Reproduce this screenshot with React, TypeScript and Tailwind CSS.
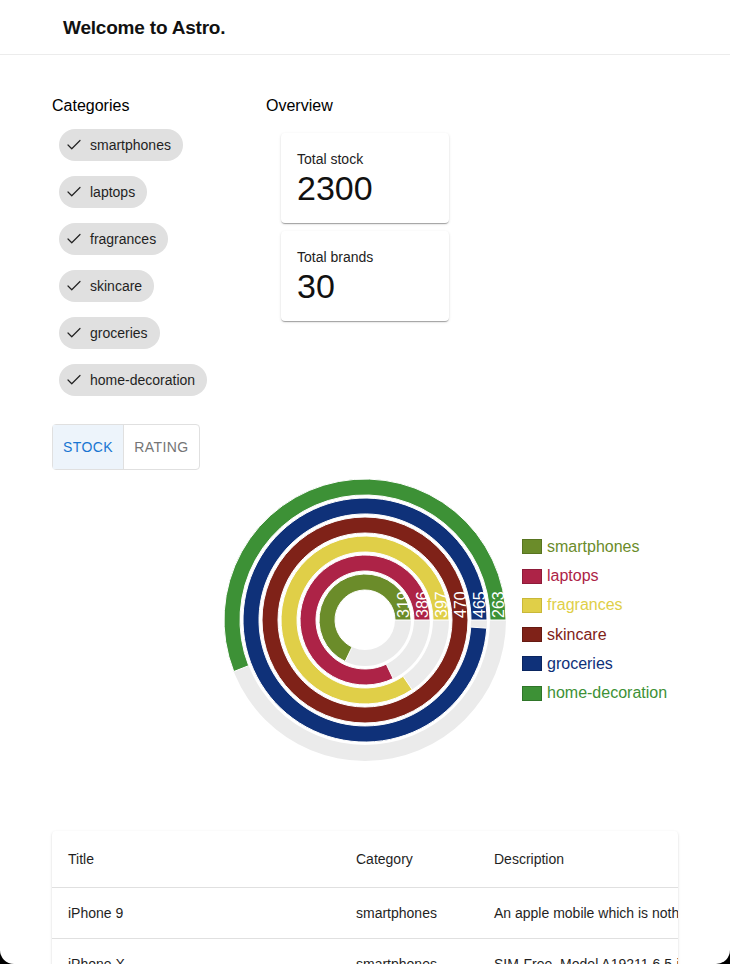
import { Check } from "lucide-react";

const series = [
  { name: "smartphones", value: 319, color: "#6b8c2a", text: "text-[#6b8c2a]", box: "bg-[#6b8c2a] border-[#587420]" },
  { name: "laptops", value: 386, color: "#ad2347", text: "text-[#ad2347]", box: "bg-[#ad2347] border-[#8e1b39]" },
  { name: "fragrances", value: 397, color: "#e0cf48", text: "text-[#e0cf48]", box: "bg-[#e0cf48] border-[#c9b838]" },
  { name: "skincare", value: 470, color: "#7f2218", text: "text-[#7f2218]", box: "bg-[#7f2218] border-[#661a12]" },
  { name: "groceries", value: 465, color: "#0f3179", text: "text-[#0f3179]", box: "bg-[#0f3179] border-[#0a2560]" },
  { name: "home-decoration", value: 263, color: "#3d9136", text: "text-[#3d9136]", box: "bg-[#3d9136] border-[#2f7529]" },
];

const products = [
  {
    title: "iPhone 9",
    category: "smartphones",
    description: "An apple mobile which is nothing like apple",
  },
  {
    title: "iPhone X",
    category: "smartphones",
    description:
      "SIM-Free, Model A19211 6.5-inch Super Retina HD display with OLED technology A12 Bionic chip with",
  },
];

const CX = 145;
const CY = 145;

function pt(r: number, deg: number) {
  const a = (deg * Math.PI) / 180;
  return `${(CX + r * Math.cos(a)).toFixed(2)} ${(CY - r * Math.sin(a)).toFixed(2)}`;
}

function sector(r0: number, r1: number, deg: number) {
  if (deg >= 359.9) {
    return `M ${CX + r1} ${CY} A ${r1} ${r1} 0 1 0 ${CX - r1} ${CY} A ${r1} ${r1} 0 1 0 ${CX + r1} ${CY} Z M ${CX + r0} ${CY} A ${r0} ${r0} 0 1 1 ${CX - r0} ${CY} A ${r0} ${r0} 0 1 1 ${CX + r0} ${CY} Z`;
  }
  const large = deg > 180 ? 1 : 0;
  return `M ${pt(r1, 0)} A ${r1} ${r1} 0 ${large} 0 ${pt(r1, deg)} L ${pt(r0, deg)} A ${r0} ${r0} 0 ${large} 1 ${pt(r0, 0)} Z`;
}

function RadialChart() {
  const max = Math.max(...series.map((s) => s.value));
  return (
    <svg width="290" height="290" viewBox="0 0 290 290">
      {series.map((s, i) => {
        const r1 = 46 + 19 * i;
        const r0 = r1 - 16;
        const deg = (s.value / max) * 360;
        const mid = (r0 + r1) / 2;
        return (
          <g key={s.name}>
            <path d={sector(r0, r1, 360)} fill="#ebebeb" fillRule="evenodd" />
            <path d={sector(r0, r1, deg)} fill={s.color} fillRule="evenodd" stroke="#fff" strokeWidth="1" />
            <text
              x={CX + mid}
              y={CY - 2}
              transform={`rotate(-90 ${CX + mid} ${CY - 2})`}
              fill="#fff"
              fontSize="16"
              dominantBaseline="central"
              style={{ fontFamily: '"Liberation Sans", Arial, sans-serif' }}
            >
              {s.value}
            </text>
          </g>
        );
      })}
    </svg>
  );
}

export default function App() {
  return (
    <div className="min-h-screen bg-white text-black font-['Liberation_Sans',Arial,sans-serif]">
      <header className="h-[55px] border-b border-[#ececec] flex items-center px-[63px]">
        <h1 className="text-[19px] font-bold tracking-[-0.2px] text-[#111] mt-[2px]">Welcome to Astro.</h1>
      </header>

      <main className="px-[52px] pt-[39px]">
        <div className="flex">
          <section className="w-[214px]">
            <h2 className="text-base leading-6">Categories</h2>
            <div className="mt-[11px] ml-[7px] flex flex-col items-start gap-[15px]">
              {series.map((s) => (
                <span
                  key={s.name}
                  className="h-8 rounded-full bg-[#e0e0e0] flex items-center pl-[6px] pr-3 gap-[7px] text-sm text-[#1f1f1f]"
                >
                  <Check size={18} strokeWidth={1.6} className="text-[#222]" />
                  {s.name}
                </span>
              ))}
            </div>
          </section>

          <section>
            <h2 className="text-base leading-6">Overview</h2>
            <div className="mt-[15px] ml-[15px] flex flex-col gap-2 w-[168px]">
              {[
                { label: "Total stock", value: "2300" },
                { label: "Total brands", value: "30" },
              ].map((c) => (
                <div
                  key={c.label}
                  className="h-[90px] rounded bg-white p-4 shadow-[0_2px_1px_-1px_rgba(0,0,0,0.2),0_1px_1px_0_rgba(0,0,0,0.14),0_1px_3px_0_rgba(0,0,0,0.12)]"
                >
                  <div className="text-sm leading-5 text-[#222]">{c.label}</div>
                  <div className="text-[34px] leading-[38px] text-[#111]">{c.value}</div>
                </div>
              ))}
            </div>
          </section>
        </div>

        <div className="mt-[28px] inline-flex h-[46px] rounded border border-[#e0e0e0] text-sm tracking-[0.4px]">
          <button className="w-[71px] uppercase bg-[#edf4fb] text-[#1976d2] border-r border-[#e0e0e0]">Stock</button>
          <button className="w-[75px] uppercase text-[#757575]">Rating</button>
        </div>

        <div className="mt-[5px] pl-[168px] flex items-center gap-3">
          <RadialChart />
          <ul className="flex flex-col gap-[9.3px] text-base leading-5">
            {series.map((s) => (
              <li key={s.name} className={`flex items-center gap-[5px] ${s.text}`}>
                <span className={`w-5 h-[15px] border ${s.box}`} />
                {s.name}
              </li>
            ))}
          </ul>
        </div>

        <div className="mt-[66px] rounded overflow-hidden bg-white shadow-[0_2px_1px_-1px_rgba(0,0,0,0.2),0_1px_1px_0_rgba(0,0,0,0.14),0_1px_3px_0_rgba(0,0,0,0.12)]">
          <table className="text-sm text-[#1f1f1f] whitespace-nowrap border-collapse">
            <thead>
              <tr className="h-14 border-b border-[#e0e0e0]">
                <th className="w-[288px] min-w-[288px] px-4 text-left font-normal">Title</th>
                <th className="w-[138px] min-w-[138px] px-4 text-left font-normal">Category</th>
                <th className="px-4 text-left font-normal">Description</th>
              </tr>
            </thead>
            <tbody>
              {products.map((p) => (
                <tr key={p.title} className="h-[51px] border-b border-[#e0e0e0]">
                  <td className="px-4">{p.title}</td>
                  <td className="px-4">{p.category}</td>
                  <td className="px-4">{p.description}</td>
                </tr>
              ))}
            </tbody>
          </table>
        </div>
      </main>

      <div className="fixed inset-0 pointer-events-none rounded-b-[14px] shadow-[0_0_0_40px_#000]" />
    </div>
  );
}
